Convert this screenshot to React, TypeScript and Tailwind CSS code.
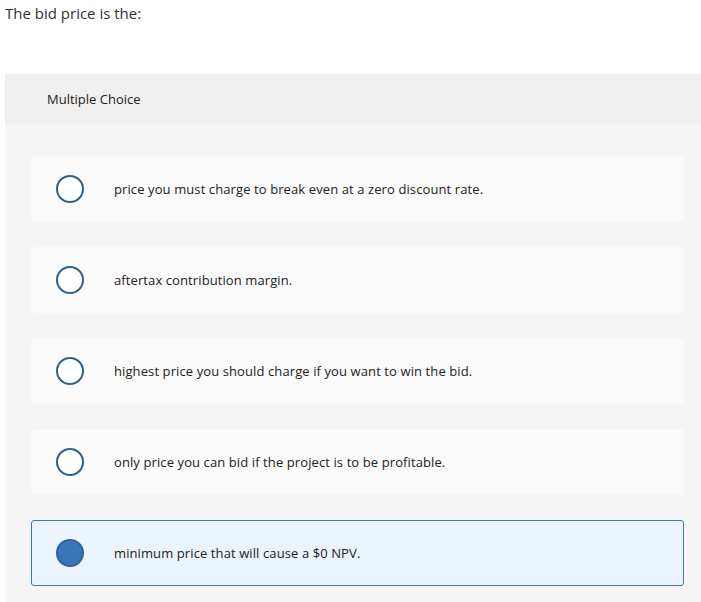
const options = [
  "price you must charge to break even at a zero discount rate.",
  "aftertax contribution margin.",
  "highest price you should charge if you want to win the bid.",
  "only price you can bid if the project is to be profitable.",
  "minimum price that will cause a $0 NPV.",
];

const selected = 4;

export default function App() {
  return (
    <div className="min-h-[602px] bg-white font-['Open_Sans',sans-serif] text-[#2a2a2a]">
      <p className="pl-[5px] pt-[2px] text-[15px] leading-[22px] text-[#333]">
        The bid price is the:
      </p>

      <div className="ml-[5px] mt-[50px]">
        <div className="h-[50px] bg-[#f0f0f0] pl-[42px] pt-[1px] flex items-center text-[13px] text-[#222]">
          Multiple Choice
        </div>
        <div className="bg-[#f5f5f5] pl-[26px] pr-[17px] pt-[32px] pb-[20px] flex flex-col gap-[25px]">
          {options.map((text, i) => {
            const on = i === selected;
            return (
              <div
                key={i}
                className={
                  on
                    ? "h-[66px] rounded-[3px] border border-[#3b78c0] bg-[#ebf3fc] flex items-center pl-[24px]"
                    : "h-[66px] rounded-[4px] bg-[#fafafa] flex items-center pl-[25px]"
                }
              >
                <span
                  className={
                    on
                      ? "w-[28px] h-[28px] rounded-full bg-[#3a75b8] border-2 border-[#2f63a0] shrink-0"
                      : "w-[28px] h-[28px] rounded-full bg-white border-2 border-[#2d5f8f] shrink-0"
                  }
                />
                <span className="ml-[30px] pt-[1px] text-[13px] tracking-[0.1px] text-[#222]">{text}</span>
              </div>
            );
          })}
        </div>
      </div>
    </div>
  );
}
